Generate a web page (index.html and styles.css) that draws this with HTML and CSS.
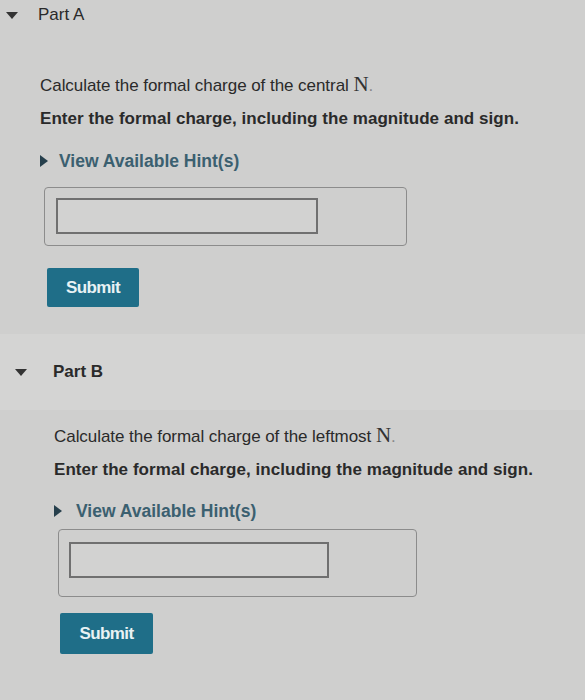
FILE: index.html
```html
<!DOCTYPE html>
<html lang="en">
<head>
<meta charset="utf-8">
<title>Part A / Part B</title>
<link rel="stylesheet" href="styles.css">
</head>
<body>
<section class="part part-a">
  <div class="part-header">
    <span class="caret-down"></span>
    <span class="part-title">Part A</span>
  </div>
  <div class="part-body">
    <p class="q">Calculate the formal charge of the central <span class="sym">N</span><span class="dot">.</span></p>
    <p class="instr">Enter the formal charge, including the magnitude and sign.</p>
    <div class="hint"><span class="caret-right"></span><span class="hint-text">View Available Hint(s)</span></div>
    <div class="answer-box"><div class="answer-input"></div></div>
    <button class="submit">Submit</button>
  </div>
</section>
<section class="part part-b">
  <div class="part-header">
    <span class="caret-down"></span>
    <span class="part-title">Part B</span>
  </div>
  <div class="part-body">
    <p class="q">Calculate the formal charge of the leftmost <span class="sym">N</span><span class="dot">.</span></p>
    <p class="instr">Enter the formal charge, including the magnitude and sign.</p>
    <div class="hint"><span class="caret-right"></span><span class="hint-text">View Available Hint(s)</span></div>
    <div class="answer-box"><div class="answer-input"></div></div>
    <button class="submit">Submit</button>
  </div>
</section>
</body>
</html>
```
FILE: styles.css
```css
html, body {
  margin: 0;
  padding: 0;
}
body {
  background: #cfcfce;
  font-family: "Liberation Sans", Arial, sans-serif;
  color: #2a2a2a;
  width: 585px;
  height: 700px;
  overflow: hidden;
}
.part-header {
  display: flex;
  align-items: center;
  height: 30px;
}
.caret-down {
  width: 0;
  height: 0;
  border-left: 6px solid transparent;
  border-right: 6px solid transparent;
  border-top: 7px solid #333;
}
.part-title {
  font-size: 17px;
  line-height: 20px;
}
.part-a .part-header {
  padding-left: 6px;
}
.part-a .part-title {
  margin-left: 20px;
}
.part-b .part-header {
  margin-top: 27px;
  height: 76px;
  padding-left: 15px;
  background: #d4d4d3;
}
.part-b .part-title {
  margin-left: 26px;
  font-weight: bold;
}
.part-body {
  display: flex;
  flex-direction: column;
  align-items: flex-start;
}
.part-a .part-body {
  padding-left: 40px;
}
.part-b .part-body {
  padding-left: 54px;
}
.q {
  margin: 44px 0 0;
  font-size: 17px;
  line-height: 20px;
  letter-spacing: -0.05px;
}
.part-b .q {
  margin-top: 15px;
}
.sym {
  font-family: "Liberation Serif", "Times New Roman", serif;
  font-size: 21px;
  color: #333;
}
.dot {
  color: #888;
}
.instr {
  margin: 13px 0 0;
  font-size: 17px;
  line-height: 20px;
  font-weight: bold;
  letter-spacing: 0.05px;
}
.hint {
  margin-top: 22px;
  display: flex;
  align-items: center;
  gap: 11px;
  height: 20px;
}
.part-b .hint {
  gap: 14px;
  margin-top: 21px;
}
.caret-right {
  width: 0;
  height: 0;
  border-top: 6px solid transparent;
  border-bottom: 6px solid transparent;
  border-left: 8px solid #263f4c;
}
.hint-text {
  font-size: 17.5px;
  font-weight: bold;
  color: #3b6070;
}
.answer-box {
  margin-top: 16px;
  margin-left: 4px;
  width: 339px;
  padding: 10px 11px 11px;
  border: 1px solid #8c8c8c;
  border-radius: 4px;
}
.part-b .answer-box {
  width: 337px;
  margin-top: 8px;
  padding: 12px 10px 18px;
}
.answer-input {
  width: 258px;
  height: 32px;
  border: 2px solid #707070;
  background: #d2d2d1;
}
.part-b .answer-input {
  width: 256px;
}
.submit {
  margin-top: 22px;
  margin-left: 7px;
  width: 92px;
  height: 39px;
  border: none;
  border-radius: 2px;
  background: #1f6e88;
  color: #e8f2f4;
  font-family: "Liberation Sans", Arial, sans-serif;
  font-size: 17px;
  font-weight: bold;
  letter-spacing: -0.6px;
  padding: 0;
}
.part-b .submit {
  margin-top: 16px;
  margin-left: 6px;
  width: 93px;
  height: 41px;
}
```
